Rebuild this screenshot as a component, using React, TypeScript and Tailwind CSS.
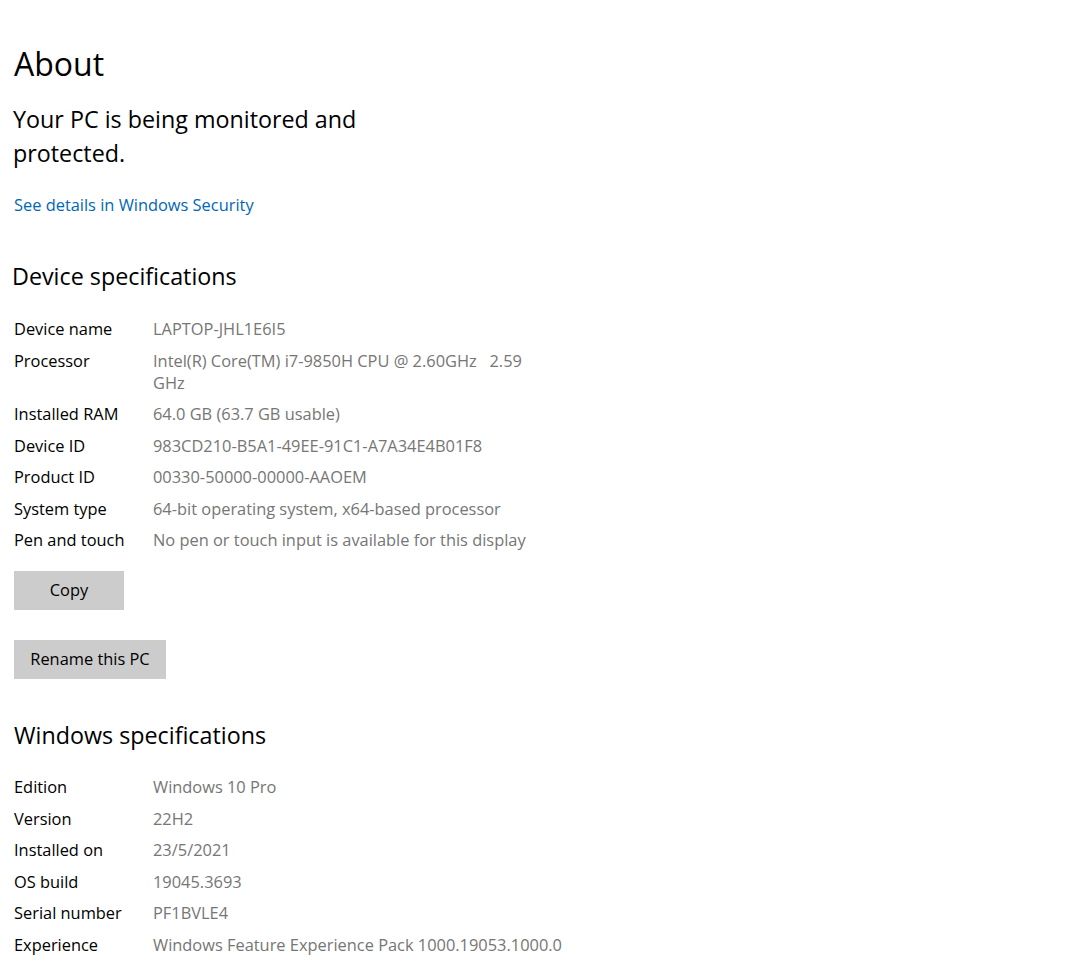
const device: [string, string][] = [
  ["Device name", "LAPTOP-JHL1E6I5"],
  ["Processor", "Intel(R) Core(TM) i7-9850H CPU @ 2.60GHz\u00a0\u00a0 2.59 GHz"],
  ["Installed RAM", "64.0 GB (63.7 GB usable)"],
  ["Device ID", "983CD210-B5A1-49EE-91C1-A7A34E4B01F8"],
  ["Product ID", "00330-50000-00000-AAOEM"],
  ["System type", "64-bit operating system, x64-based processor"],
  ["Pen and touch", "No pen or touch input is available for this display"],
];

const windows: [string, string][] = [
  ["Edition", "Windows 10 Pro"],
  ["Version", "22H2"],
  ["Installed on", "23/5/2021"],
  ["OS build", "19045.3693"],
  ["Serial number", "PF1BVLE4"],
  ["Experience", "Windows Feature Experience Pack 1000.19053.1000.0"],
];

function SpecTable({ rows, wide }: { rows: [string, string][]; wide?: boolean }) {
  return (
    <div className="flex flex-col gap-[9.5px]">
      {rows.map(([label, value]) => (
        <div key={label} className="flex text-[16.4px] leading-[22px]">
          <div className="w-[139px] shrink-0 text-[#000000]">{label}</div>
          <div className={wide ? "whitespace-nowrap text-[#767676]" : "w-[395px] text-[#767676]"}>{value}</div>
        </div>
      ))}
    </div>
  );
}

export default function App() {
  return (
    <div className="min-h-screen bg-white pl-[14px] pt-[40px] font-['Open_Sans',sans-serif] text-black">
      <h1 className="text-[32px] leading-[48px] font-normal">About</h1>
      <p className="mt-[14px] w-[360px] text-[23.3px] leading-[34px] -ml-[1px]">
        Your PC is being monitored and protected.
      </p>
      <a href="#" className="mt-[24px] block w-fit text-[16.4px] leading-[22px] text-[#0067b8]">
        See details in Windows Security
      </a>

      <h2 className="mt-[43px] -ml-[2px] text-[23.3px] leading-[34px]">Device specifications</h2>
      <div className="mt-[25px]">
        <SpecTable rows={device} />
      </div>

      <div className="mt-[20px] flex flex-col items-start gap-[30px]">
        <button className="h-[39px] w-[110px] bg-[#cccccc] text-[16.4px]">Copy</button>
        <button className="h-[39px] w-[152px] bg-[#cccccc] text-[16.4px]">Rename this PC</button>
      </div>

      <h2 className="mt-[39px] text-[23.3px] leading-[34px]">Windows specifications</h2>
      <div className="mt-[24px]">
        <SpecTable rows={windows} wide />
      </div>
    </div>
  );
}
